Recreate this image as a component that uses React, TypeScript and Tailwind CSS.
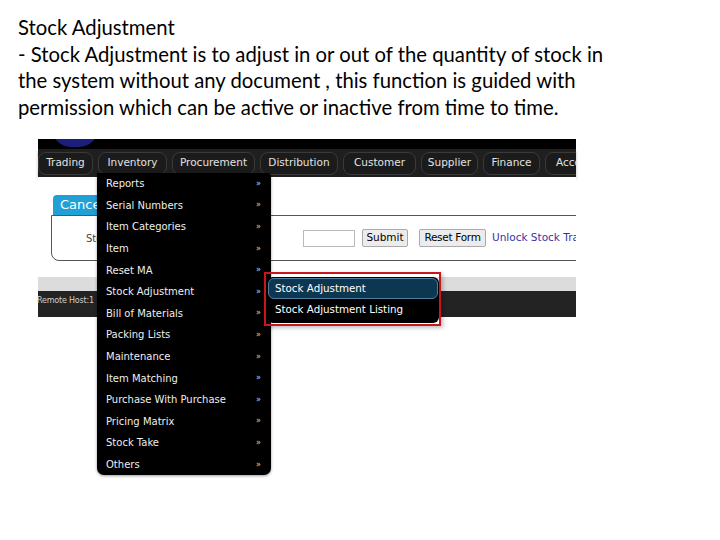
import React from "react";

const navItems: { label: string; w: string }[] = [
  { label: "Trading", w: "w-[55px]" },
  { label: "Inventory", w: "w-[69px]" },
  { label: "Procurement", w: "w-[83px]" },
  { label: "Distribution", w: "w-[78px]" },
  { label: "Customer", w: "w-[73px]" },
  { label: "Supplier", w: "w-[57px]" },
  { label: "Finance", w: "w-[57px]" },
  { label: "Accounts", w: "w-[70px]" },
];

const menuItems = [
  "Reports",
  "Serial Numbers",
  "Item Categories",
  "Item",
  "Reset MA",
  "Stock Adjustment",
  "Bill of Materials",
  "Packing Lists",
  "Maintenance",
  "Item Matching",
  "Purchase With Purchase",
  "Pricing Matrix",
  "Stock Take",
  "Others",
];

export default function App() {
  return (
    <div className="w-[720px] h-[540px] bg-white overflow-hidden">
      <div
        className="pt-[14px] pl-[18px] text-[20.3px] leading-[26.5px] text-black"
        style={{ fontFamily: "Lato, 'Open Sans', sans-serif" }}
      >
        <div>Stock Adjustment</div>
        <div>- Stock Adjustment is to adjust in or out of the quantity of stock in</div>
        <div>the system without any document , this function is guided with</div>
        <div>permission which can be active or inactive from time to time.</div>
      </div>

      <div
        className="relative ml-[38px] mt-[19px] w-[538px]"
        style={{ fontFamily: "'DejaVu Sans', Verdana, sans-serif" }}
      >
        {/* top black strip */}
        <div className="h-[10px] bg-black overflow-hidden relative">
          <div className="absolute left-[14px] top-[-30px] w-[46px] h-[38px] rounded-full bg-[#1b1f7a]" />
        </div>
        {/* nav */}
        <div className="h-[28px] bg-[#1f1f1f] overflow-hidden flex items-center gap-[5px] shadow-[0_2px_3px_rgba(0,0,0,0.25)]">
          {navItems.map((n) => (
            <div
              key={n.label}
              className={`${n.w} shrink-0 h-[23px] rounded-[8px] border border-[#3a3a3a] bg-[#1b1b1b] flex items-center justify-center text-[10.5px] text-[#e2e2e2] whitespace-nowrap`}
            >
              {n.label}
            </div>
          ))}
        </div>
        {/* content */}
        <div className="h-[100px] bg-white overflow-hidden pt-[18px] pl-[13px]">
          <div className="ml-[2px] w-[70px] h-[20px] rounded-t-[4px] bg-[#21a0d6] text-white text-[13px] leading-[20px] pl-[7px]">
            Cancel
          </div>
          <div className="w-[560px] h-[46px] border border-[#555] rounded-bl-[8px] flex items-center text-[10px] text-[#444]">
            <span className="ml-[34px] w-[217px]">Stock</span>
            <div className="w-[52px] h-[17px] border border-[#bbb] bg-white" />
            <div className="ml-[7px] w-[46px] h-[18px] border border-[#aaa] rounded-[2px] bg-[#ececec] text-[10.5px] text-black flex items-center justify-center">
              Submit
            </div>
            <div className="ml-[11px] w-[67px] h-[18px] border border-[#aaa] rounded-[2px] bg-[#ececec] text-[10.5px] text-black flex items-center justify-center tracking-[-0.3px]">
              Reset Form
            </div>
            <span className="ml-[6px] text-[10.5px] text-[#3434a6] whitespace-nowrap">Unlock Stock Transfer</span>
          </div>
        </div>
        <div className="h-[14px] bg-[#dcdcdc]" />
        <div className="h-[26px] bg-[#232323] flex items-start pt-[4px] text-[8px] text-[#cfcfcf]">
          <span className="-ml-[1px] whitespace-nowrap tracking-[-0.2px]">Remote Host:1</span>
        </div>

        {/* dropdown */}
        <div className="absolute left-[59px] top-[34px] w-[174px] bg-black rounded-b-[7px] rounded-tr-[4px] shadow-[0_1px_3px_rgba(0,0,0,0.4)]">
          {menuItems.map((m) => (
            <div
              key={m}
              className="h-[21.6px] flex items-center justify-between pl-[9px] pr-[10px] text-[10px] text-[#eeeeee]"
            >
              <span>{m}</span>
              <span className="text-[8px] text-[#d0d0d0]">»</span>
            </div>
          ))}
        </div>

        {/* submenu with red highlight */}
        <div className="absolute left-[226px] top-[133px] w-[177px] h-[54px] border-2 border-[#c8161d] pl-[1px] pt-[3px] shadow-[2px_2px_4px_rgba(0,0,0,0.25)]">
          <div className="w-[172px] h-[46px] bg-black rounded-[6px] p-[1px] flex flex-col">
            <div className="h-[21px] rounded-[6px] bg-[#0d3650] border border-[#4f7f9c] flex items-center pl-[6px] text-[10.3px] text-white">
              Stock Adjustment
            </div>
            <div className="h-[22px] flex items-center pl-[7px] text-[10.3px] text-white">
              Stock Adjustment Listing
            </div>
          </div>
        </div>
      </div>
    </div>
  );
}
